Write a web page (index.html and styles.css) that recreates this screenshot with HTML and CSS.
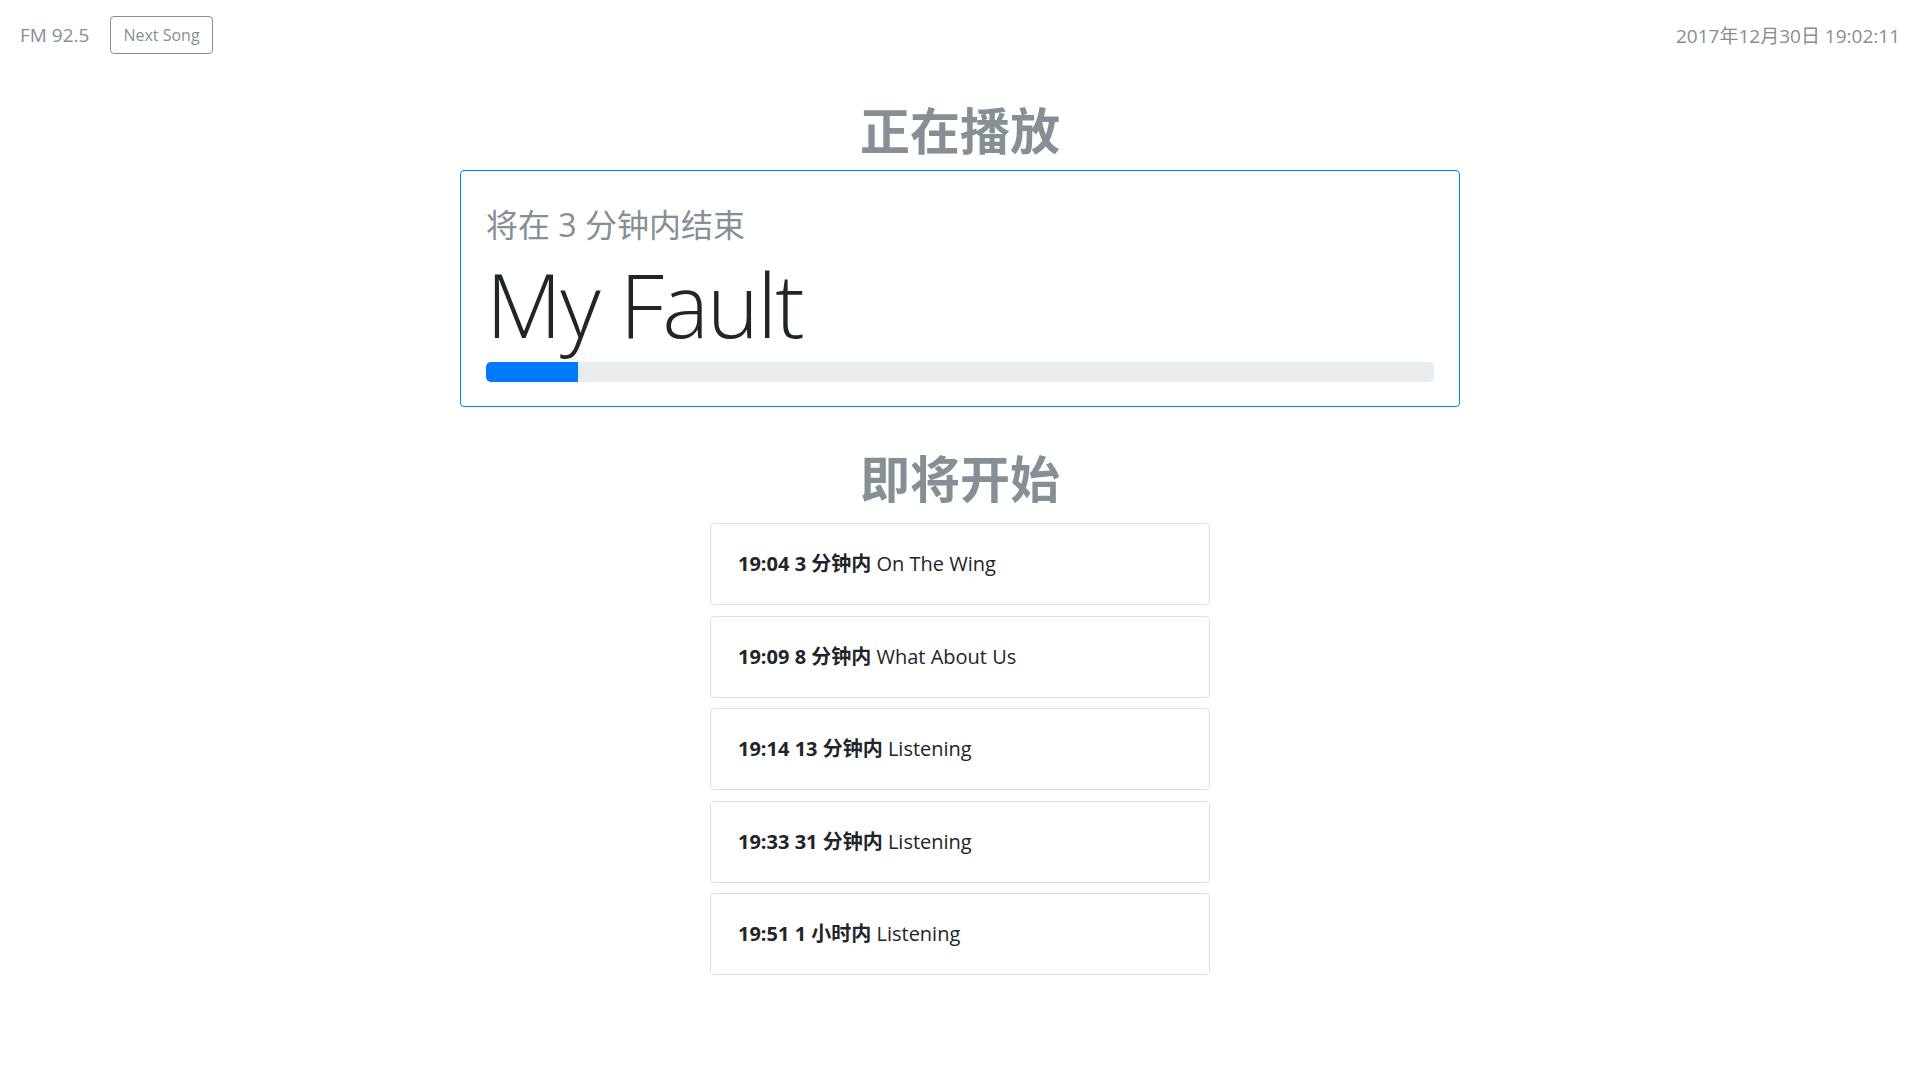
FILE: index.html
```html
<!DOCTYPE html>
<html lang="zh-CN">
<head>
<meta charset="utf-8">
<title>FM 92.5</title>
<link rel="stylesheet" href="styles.css">
</head>
<body>
<header class="topbar">
  <div class="topbar-left">
    <span class="brand">FM 92.5</span>
    <button class="btn-outline" type="button">Next Song</button>
  </div>
  <div class="clock">2017年12月30日 19:02:11</div>
</header>
<main class="main">
  <h1 class="section-title">正在播放</h1>
  <section class="now-card">
    <h2 class="now-sub">将在 3 分钟内结束</h2>
    <div class="now-title">My Fault</div>
    <div class="progress"><div class="progress-fill" style="width: 9.7%"></div></div>
  </section>
  <h1 class="section-title upcoming-title">即将开始</h1>
  <ul class="queue">
    <li class="queue-item"><b>19:04 3 分钟内</b> On The Wing</li>
    <li class="queue-item"><b>19:09 8 分钟内</b> What About Us</li>
    <li class="queue-item"><b>19:14 13 分钟内</b> Listening</li>
    <li class="queue-item"><b>19:33 31 分钟内</b> Listening</li>
    <li class="queue-item"><b>19:51 1 小时内</b> Listening</li>
  </ul>
</main>
</body>
</html>
```
FILE: styles.css
```css
html, body {
  margin: 0;
  padding: 0;
  background: #fff;
}
body {
  font-family: "Open Sans", "Noto Sans CJK SC", sans-serif;
  color: #212529;
}
.topbar {
  display: flex;
  justify-content: space-between;
  align-items: center;
  padding: 16px 20px 0 20px;
  height: 38px;
}
.topbar-left {
  display: flex;
  align-items: center;
}
.brand {
  font-size: 19px;
  color: #868e96;
  margin-right: 21px;
}
.btn-outline {
  font-family: inherit;
  font-size: 16px;
  line-height: 24px;
  height: 38px;
  padding: 6px 12px;
  color: #868e96;
  background: #fff;
  border: 1px solid #868e96;
  border-radius: 4px;
}
.clock {
  font-size: 19px;
  color: #868e96;
}
.main {
  display: flex;
  flex-direction: column;
  align-items: center;
}
.section-title {
  font-size: 50px;
  line-height: 60px;
  font-weight: 700;
  color: #868e96;
  margin: 47px 0 9px;
}
.upcoming-title {
  margin: 42px 0 14px;
}
.now-card {
  box-sizing: border-box;
  width: 1000px;
  border: 1px solid #007bff;
  border-radius: 4px;
  padding: 35px 25px 24px 25px;
}
.now-sub {
  margin: 0;
  font-size: 32px;
  line-height: 38px;
  font-weight: 400;
  color: #868e96;
}
.now-title {
  font-size: 88px;
  font-weight: 300;
  line-height: 105px;
  letter-spacing: -1.8px;
  margin-top: 8px;
  color: #212529;
}
.progress {
  margin-top: 5px;
  height: 20px;
  background: #e9ecef;
  border-radius: 5px;
  overflow: hidden;
}
.progress-fill {
  height: 100%;
  background: #007bff;
}
.queue {
  list-style: none;
  margin: 0;
  padding: 0;
  width: 500px;
  display: flex;
  flex-direction: column;
  gap: 10.5px;
}
.queue-item {
  box-sizing: border-box;
  height: 82px;
  border: 1px solid rgba(0, 0, 0, 0.125);
  border-radius: 4px;
  padding: 25px 20px 25px 27px;
  font-size: 20px;
  line-height: 30px;
  color: #212529;
}
.queue-item b {
  font-weight: 700;
}
```
